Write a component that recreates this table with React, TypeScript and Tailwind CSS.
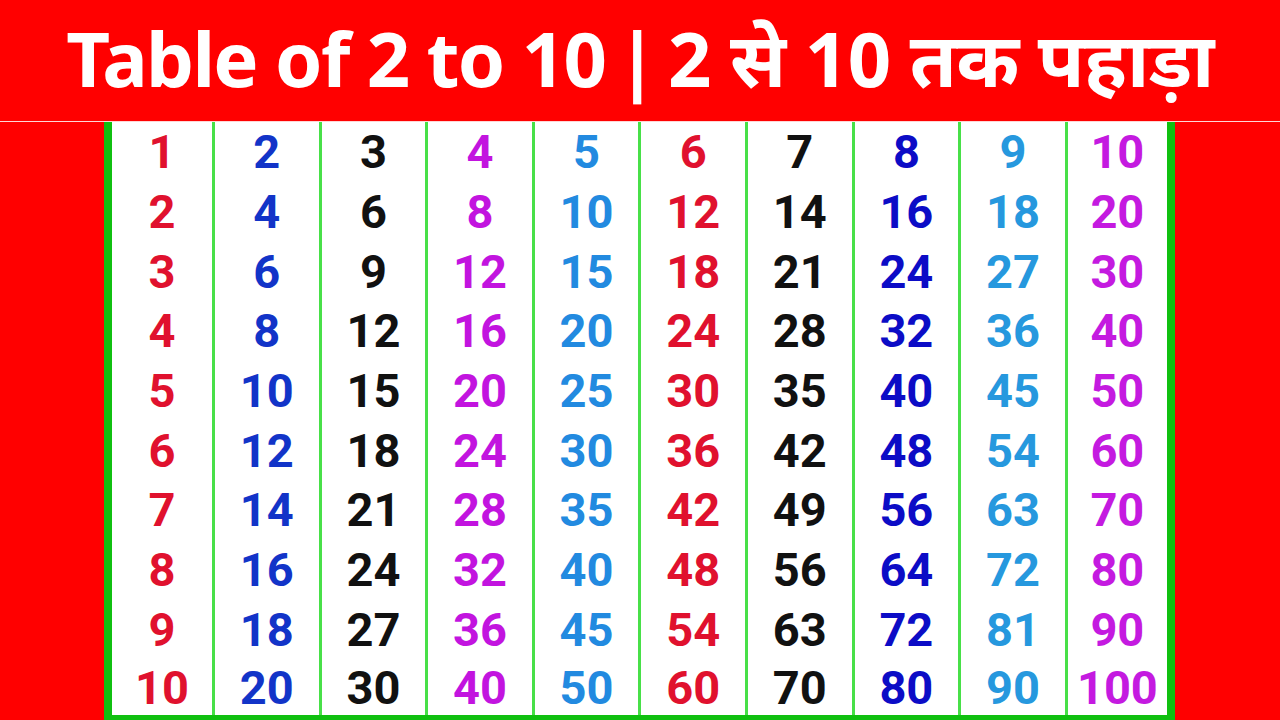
import React from "react";

const colors = [
  "text-[#e0112e]",
  "text-[#1234c8]",
  "text-[#111111]",
  "text-[#c214df]",
  "text-[#228ae0]",
  "text-[#e0112e]",
  "text-[#111111]",
  "text-[#0c0cc6]",
  "text-[#2698de]",
  "text-[#c41ae0]",
];

export default function App() {
  const cols = Array.from({ length: 10 }, (_, i) => i + 1);
  const rows = Array.from({ length: 10 }, (_, i) => i + 1);
  return (
    <div className="w-[1280px] h-[720px] bg-[#ff0000] overflow-hidden flex flex-col">
      <div className="h-[122px] shrink-0 border-b border-[#ffd6d6] flex items-center justify-center">
        <h1
          className="text-white font-bold text-[76px] leading-none pb-[6px] flex items-baseline whitespace-pre"
          style={{ fontFamily: '"Noto Sans", "Noto Sans Devanagari", "Open Sans", sans-serif' }}
        >
          <span className="tracking-[-1.7px]">Table of 2 to 10</span>
          <span className="ml-[11px] mr-[10px]">|</span>
          <span className="tracking-[-0.6px]">2 से 10 तक पहाड़ा</span>
        </h1>
      </div>
      <div className="h-[598px] min-h-0 flex">
        <div className="ml-[104px] w-[1071px] h-[598px] border-l-[8px] border-r-[8px] border-b-[5px] border-[#10c010] bg-white grid grid-cols-[100px_repeat(8,106.6px)_1fr] grid-rows-[100%] overflow-hidden">
          {cols.map((c, ci) => (
            <div
              key={c}
              className={`flex flex-col min-h-0 ${ci > 0 ? "border-l-[3px] border-[#48e048]" : ""}`}
            >
              {rows.map((r) => (
                <div
                  key={r}
                  className={`${r === 10 ? "flex-1 min-h-0" : "h-[59.7px] shrink-0"} flex items-center justify-center font-bold text-[47px] leading-none ${colors[ci]}`}
                  style={{ fontFamily: 'Roboto, "Liberation Sans", sans-serif' }}
                >
                  {c * r}
                </div>
              ))}
            </div>
          ))}
        </div>
      </div>
    </div>
  );
}
